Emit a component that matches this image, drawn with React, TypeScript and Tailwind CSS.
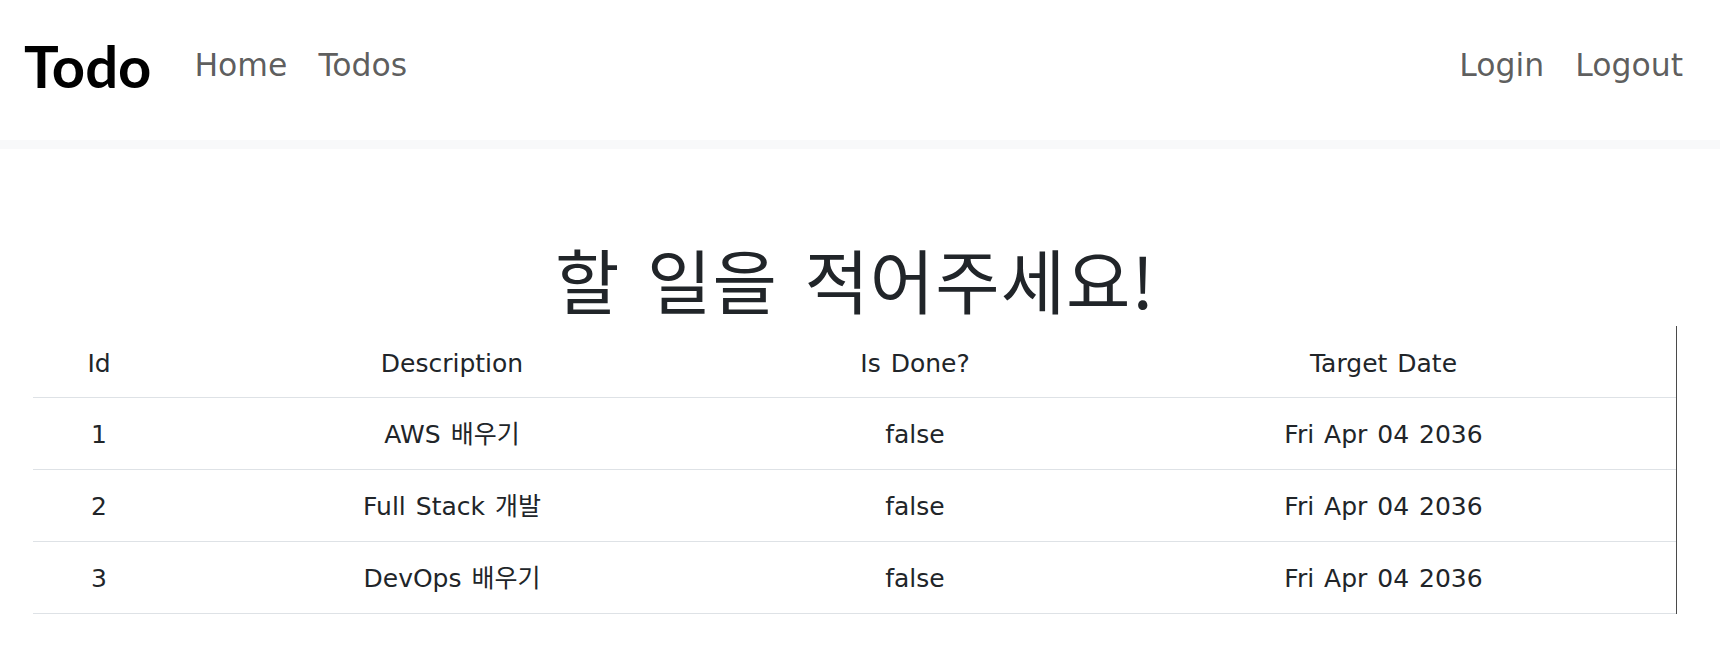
import React from 'react';

interface Todo {
  id: number;
  description: string;
  done: boolean;
  targetDate: string;
}

const todos: Todo[] = [
  { id: 1, description: 'AWS 배우기', done: false, targetDate: 'Fri Apr 04 2036' },
  { id: 2, description: 'Full Stack 개발', done: false, targetDate: 'Fri Apr 04 2036' },
  { id: 3, description: 'DevOps 배우기', done: false, targetDate: 'Fri Apr 04 2036' },
];

const body = { fontFamily: '"DejaVu Sans", "Noto Sans CJK KR", sans-serif' };

function Header() {
  return (
    <header className="h-[149px] border-b-[9px] border-[#f8f9fa] bg-white">
      <nav className="flex h-[132px] items-center pl-[24px] pr-[37px]">
        <a
          className="text-[58px] font-bold leading-none text-black"
          style={{ fontFamily: 'Lato, "Noto Sans CJK KR", sans-serif' }}
        >
          Todo
        </a>
        <a className="ml-[43px] text-[31.5px] leading-none text-black/65" style={body}>
          Home
        </a>
        <a className="ml-[31px] text-[31.5px] leading-none text-black/65" style={body}>
          Todos
        </a>
        <div className="ml-auto flex items-center">
          <a className="text-[31.5px] leading-none text-black/65" style={body}>
            Login
          </a>
          <a className="ml-[31px] text-[31.5px] leading-none text-black/65" style={body}>
            Logout
          </a>
        </div>
      </nav>
    </header>
  );
}

export default function App() {
  return (
    <div className="min-h-screen bg-white">
      <Header />
      <main className="pt-[88px]">
        <h1
          className="ml-[33px] mb-[5px] w-[1644px] text-center text-[70px] font-normal leading-[1.2] tracking-[1px] text-[#212529] [word-spacing:10px]"
          style={{ fontFamily: '"Noto Sans CJK KR", "DejaVu Sans", sans-serif' }}
        >
          할 일을 적어주세요!
        </h1>
        <div className="ml-[33px] w-[1644px] border-r border-[#4a4a4a]">
          <table
            className="w-[1643px] table-fixed border-collapse text-[25px] text-[#212529] [word-spacing:2px]"
            style={body}
          >
            <colgroup>
              <col className="w-[132px]" />
              <col className="w-[574px]" />
              <col className="w-[352px]" />
              <col className="w-[585px]" />
            </colgroup>
            <thead>
              <tr className="h-[71px] border-b border-[#dee2e6]">
                <th className="pt-[5px] font-normal">Id</th>
                <th className="pt-[5px] font-normal">Description</th>
                <th className="pt-[5px] font-normal">Is Done?</th>
                <th className="pt-[5px] font-normal">Target Date</th>
              </tr>
            </thead>
            <tbody>
              {todos.map((t) => (
                <tr key={t.id} className="h-[72px] border-b border-[#dee2e6]">
                  <td className="pt-[3px] text-center">{t.id}</td>
                  <td className="pt-[3px] text-center">{t.description}</td>
                  <td className="pt-[3px] text-center">{t.done.toString()}</td>
                  <td className="pt-[3px] text-center">{t.targetDate}</td>
                </tr>
              ))}
            </tbody>
          </table>
        </div>
      </main>
    </div>
  );
}
